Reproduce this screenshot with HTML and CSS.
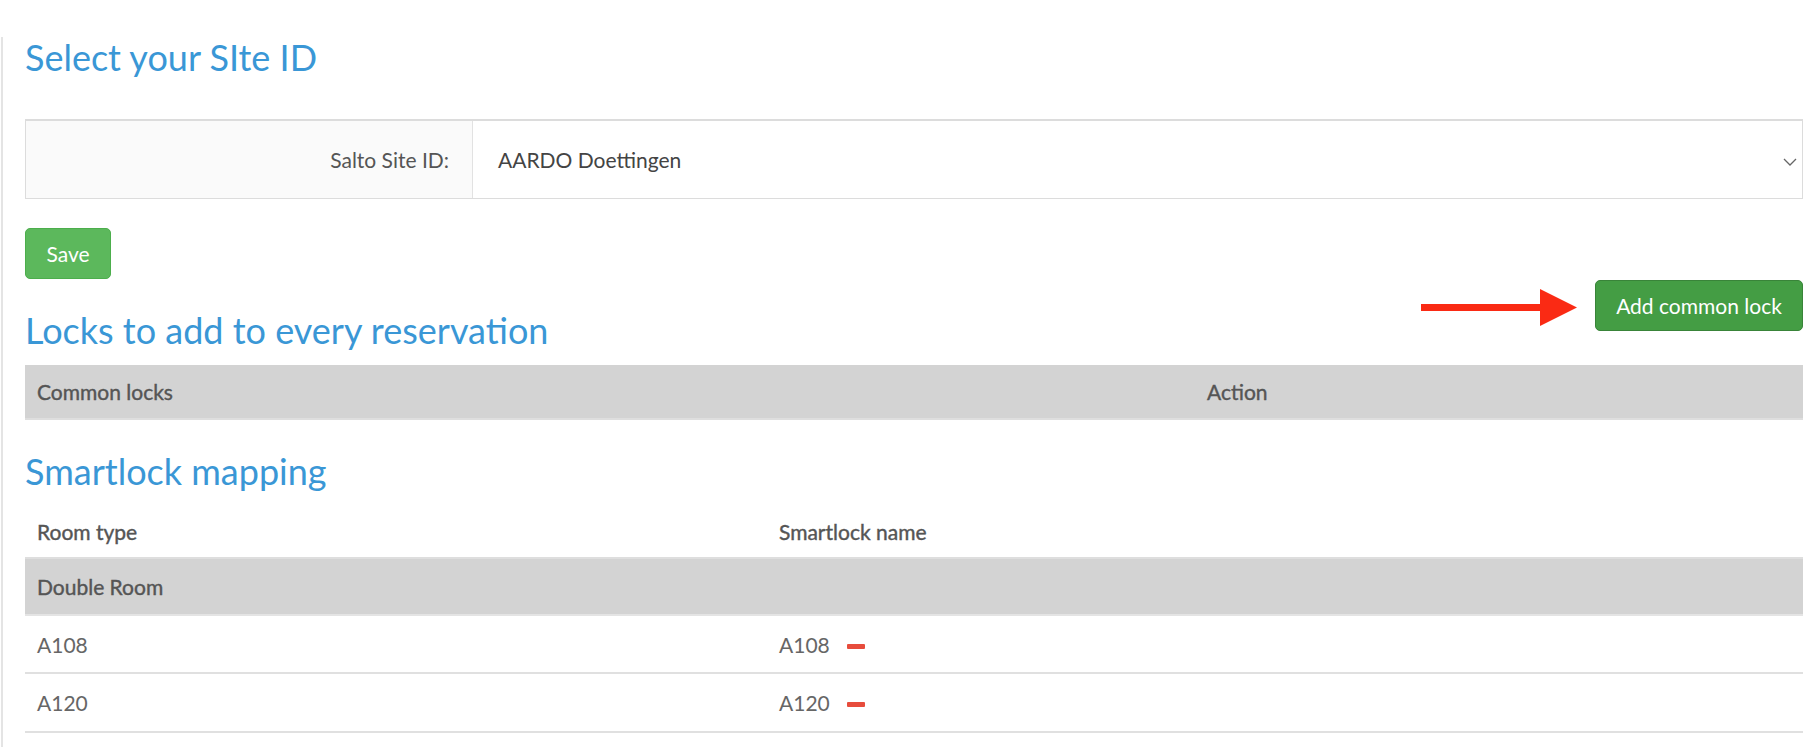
FILE: index.html
```html
<!DOCTYPE html>
<html>
<head>
    <title>Salto settings</title>
    <link rel="stylesheet" href="styles.css">
</head>
<body>
    <div class="page">
        <h2 class="title first">Select your SIte ID</h2>

        <div class="site-form">
            <div class="site-label">Salto Site ID:</div>
            <div class="site-select">
                <span>AARDO Doettingen</span>
                <svg class="chevron" width="14" height="8" viewBox="0 0 14 8">
                    <path d="M1 1 L7 7 L13 1" fill="none" stroke="#666" stroke-width="1.3"/>
                </svg>
            </div>
        </div>

        <button class="btn btn-save">Save</button>

        <div class="section-head">
            <h2 class="title">Locks to add to every reservation</h2>
            <svg class="arrow" width="156" height="37" viewBox="0 0 156 37">
                <rect x="0" y="15" width="122" height="7" fill="#fa2a14"/>
                <polygon points="119,0 156,18.5 119,37" fill="#fa2a14"/>
            </svg>
            <button class="btn btn-add">Add common lock</button>
        </div>

        <table class="grid common">
            <thead>
                <tr>
                    <th class="col-name">Common locks</th>
                    <th>Action</th>
                </tr>
            </thead>
            <tbody>
            </tbody>
        </table>

        <h2 class="title">Smartlock mapping</h2>

        <table class="grid mapping">
            <thead>
                <tr>
                    <th class="col-room">Room type</th>
                    <th>Smartlock name</th>
                </tr>
            </thead>
            <tbody>
                <tr class="group">
                    <td>Double Room</td>
                    <td></td>
                </tr>
                <tr>
                    <td>A108</td>
                    <td>A108 <span class="remove"></span></td>
                </tr>
                <tr>
                    <td>A120</td>
                    <td>A120 <span class="remove"></span></td>
                </tr>
            </tbody>
        </table>
    </div>
</body>
</html>
```

FILE: styles.css
```css
body {
    margin: 0;
    background-color: #fff;
    font-family: Lato, "Liberation Sans", sans-serif;
    font-size: 21px;
    color: #666;
}
.page {
    margin: 8px 0 0 1px;
    padding: 0 6px 0 22px;
    border-left: 2px solid #e4e4e4;
    min-height: 739px;
    box-sizing: border-box;
}
.title {
    margin: 31px 0 0;
    font-size: 36px;
    line-height: 40px;
    font-weight: normal;
    color: #3a97d6;
}
.title.first {
    margin-top: 37px;
}
.site-form {
    display: flex;
    margin-top: 42px;
    height: 77px;
    border: 1px solid #dcdcdc;
    border-top-width: 2px;
}
.site-label {
    width: 423px;
    padding-right: 23px;
    display: flex;
    align-items: center;
    justify-content: flex-end;
    background-color: #fafafa;
    border-right: 1px solid #e2e2e2;
    color: #555;
}
.site-select {
    flex: 1;
    display: flex;
    align-items: center;
    justify-content: space-between;
    padding: 0 5px 0 25px;
    color: #444;
}
.chevron {
    margin-top: 4px;
}
.btn {
    font-family: Lato, "Liberation Sans", sans-serif;
    font-size: 21px;
    color: #fff;
    height: 51px;
    border-radius: 5px;
    cursor: pointer;
}
.btn-save {
    display: block;
    margin-top: 29px;
    width: 86px;
    background-color: #5cb85c;
    border: 1px solid #4cae4c;
}
.section-head {
    position: relative;
    display: flex;
    justify-content: space-between;
    align-items: flex-start;
    margin-top: 1px;
}
.section-head .title {
    margin-top: 30px;
}
.btn-add {
    width: 208px;
    background-color: #449d44;
    border: 1px solid #398439;
}
.arrow {
    position: absolute;
    top: 9px;
    right: 226px;
}
.grid {
    width: 100%;
    border-collapse: collapse;
}
.grid.common {
    margin-top: 15px;
}
.grid.mapping {
    margin-top: 15px;
}
.grid th, .grid td {
    text-align: left;
    padding: 0 12px;
}
.grid th {
    height: 51px;
    font-weight: normal;
    color: #555;
    -webkit-text-stroke: 0.4px #555;
    border-bottom: 2px solid #dedede;
}
.grid td {
    height: 56px;
    border-bottom: 2px solid #e0e0e0;
}
.grid tbody tr:last-child td {
    height: 57px;
}
.common th {
    height: 53px;
    background-color: #d3d3d3;
}
.col-name {
    width: 1146px;
}
.col-room {
    width: 718px;
}
.grid tr.group td {
    height: 55px;
    background-color: #d3d3d3;
    color: #555;
    -webkit-text-stroke: 0.4px #555;
    border-bottom: 2px solid #e4e4e4;
}
.remove {
    display: inline-block;
    width: 18px;
    height: 5px;
    margin-left: 12px;
    vertical-align: 4px;
    border-radius: 1px;
    background-color: #e74c3c;
}
```
